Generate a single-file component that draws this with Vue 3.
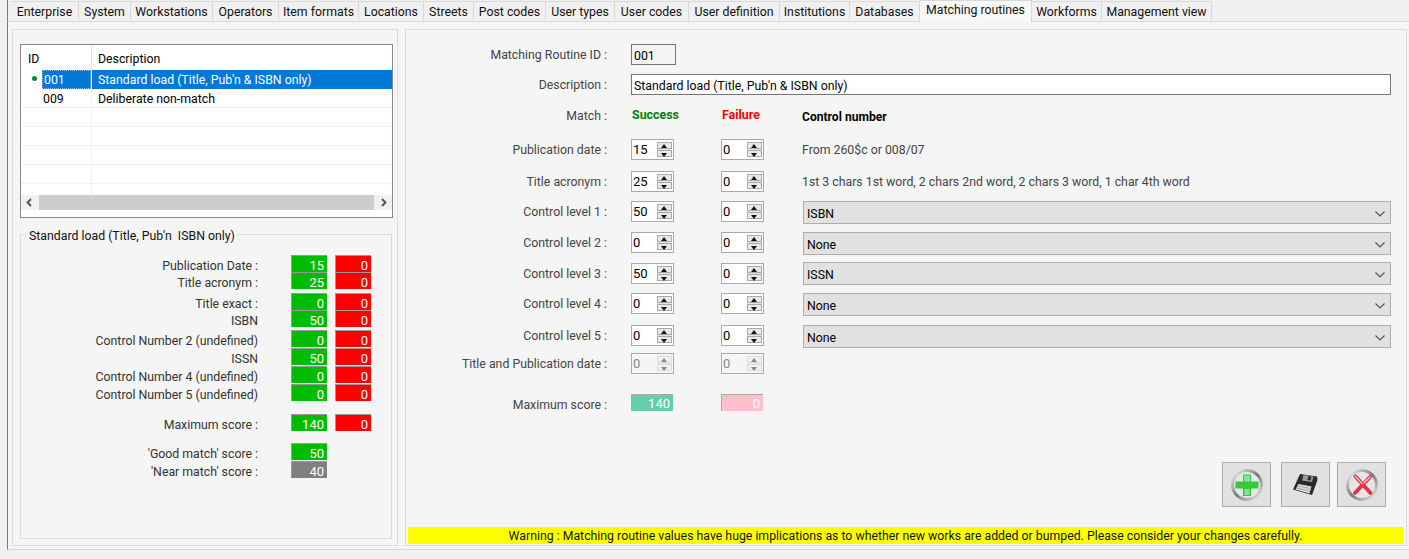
<script setup>
const tabs = [
  ['Enterprise', 68], ['System', 52], ['Workstations', 82], ['Operators', 66], ['Item formats', 80],
  ['Locations', 65], ['Streets', 50], ['Post codes', 72], ['User types', 69], ['User codes', 74],
  ['User definition', 91], ['Institutions', 70], ['Databases', 70], ['Matching routines', 112],
  ['Workforms', 70], ['Management view', 110]
]
const listRows = [
  { id: '001', desc: "Standard load (Title, Pub'n & ISBN only)", selected: true },
  { id: '009', desc: 'Deliberate non-match' },
  { id: '', desc: '' }, { id: '', desc: '' }, { id: '', desc: '' }, { id: '', desc: '' }
]
const scores = [
  { label: 'Publication Date :', s: 15, f: 0, top: 14 },
  { label: 'Title acronym :', s: 25, f: 0, top: 0 },
  { label: 'Title exact :', s: 0, f: 0, top: 4 },
  { label: 'ISBN', s: 50, f: 0, top: 0 },
  { label: 'Control Number 2 (undefined)', s: 0, f: 0, top: 3 },
  { label: 'ISSN', s: 50, f: 0, top: 1 },
  { label: 'Control Number 4 (undefined)', s: 0, f: 0, top: 1 },
  { label: 'Control Number 5 (undefined)', s: 0, f: 0, top: 1 },
  { label: 'Maximum score :', s: 140, f: 0, top: 13 },
  { label: "'Good match' score :", s: 50, top: 12 },
  { label: "'Near match' score :", s: 40, top: 1, grey: true }
]
const fields = [
  { label: 'Publication date :', s: 15, f: 0, note: 'From 260$c or 008/07', h: 32 },
  { label: 'Title acronym :', s: 25, f: 0, note: '1st 3 chars 1st word, 2 chars 2nd word, 2 chars 3 word, 1 char 4th word', h: 30 },
  { label: 'Control level 1 :', s: 50, f: 0, combo: 'ISBN', h: 31 },
  { label: 'Control level 2 :', s: 0, f: 0, combo: 'None', h: 31 },
  { label: 'Control level 3 :', s: 50, f: 0, combo: 'ISSN', comboTop: -1, h: 30 },
  { label: 'Control level 4 :', s: 0, f: 0, combo: 'None', h: 32 },
  { label: 'Control level 5 :', s: 0, f: 0, combo: 'None', h: 28 },
  { label: 'Title and Publication date :', s: 0, f: 0, disabled: true, h: 41 }
]
</script>

<template>
  <div class="app">
    <nav class="tabs">
      <div
        v-for="t in tabs"
        :key="t[0]"
        class="tab"
        :class="{ active: t[0] === 'Matching routines' }"
        :style="{ width: t[1] + 'px' }"
      >{{ t[0] }}</div>
    </nav>
    <main class="page">
      <section class="panel left">
        <div class="list">
          <div class="list-head">
            <span class="c-id">ID</span>
            <span class="c-desc">Description</span>
          </div>
          <div v-for="(r, i) in listRows" :key="i" class="list-row" :class="{ sel: r.selected }">
            <span class="c-id">
              <i v-if="r.selected" class="dot"></i>
              <b class="id-text">{{ r.id }}</b>
            </span>
            <span class="c-desc">{{ r.desc }}</span>
          </div>
          <div class="list-row tail"><span class="c-id"></span></div>
          <div class="hscroll">
            <svg width="17" height="15" viewBox="0 0 17 15"><path d="M10 4 6.500 7.500 10 11" fill="none" stroke="#505050" stroke-width="1.800"/></svg>
            <div class="thumb"></div>
            <svg width="17" height="15" viewBox="0 0 17 15"><path d="M7 4 10.500 7.500 7 11" fill="none" stroke="#505050" stroke-width="1.800"/></svg>
          </div>
        </div>
        <fieldset class="group">
          <legend>Standard load (Title, Pub'n&nbsp; ISBN only)</legend>
          <div v-for="s in scores" :key="s.label" class="score-row" :style="{ marginTop: s.top + 'px' }">
            <span class="score-label">{{ s.label }}</span>
            <span class="score" :class="s.grey ? 'grey' : 'green'">{{ s.s }}</span>
            <span v-if="s.f !== undefined" class="score red">{{ s.f }}</span>
          </div>
        </fieldset>
      </section>

      <section class="panel right">
        <div class="form">
          <div class="frow first">
            <label>Matching Routine ID :</label>
            <div class="input id-input">001</div>
          </div>
          <div class="frow desc">
            <label>Description :</label>
            <div class="input desc-input">Standard load (Title, Pub'n &amp; ISBN only)</div>
          </div>
          <div class="frow match">
            <label>Match :</label>
            <b class="h success">Success</b>
            <b class="h failure">Failure</b>
            <b class="h control">Control number</b>
          </div>
          <div v-for="f in fields" :key="f.label" class="frow" :style="{ height: f.h + 'px' }">
            <label>{{ f.label }}</label>
            <div class="cell-s">
              <div class="spin" :class="{ off: f.disabled }">
                <span class="val">{{ f.s }}</span>
                <span class="arrows">
                  <i class="up"></i><i class="down"></i>
                </span>
              </div>
            </div>
            <div class="cell-f">
              <div class="spin" :class="{ off: f.disabled }">
                <span class="val">{{ f.f }}</span>
                <span class="arrows">
                  <i class="up"></i><i class="down"></i>
                </span>
              </div>
            </div>
            <span v-if="f.note" class="note">{{ f.note }}</span>
            <div v-if="f.combo" class="combo" :style="{ marginTop: (f.comboTop || 0) + 'px' }">
              <span>{{ f.combo }}</span>
              <svg width="12" height="8" viewBox="0 0 12 8"><path d="M1.500 1.500 6 6l4.500-4.500" fill="none" stroke="#555" stroke-width="1.200"/></svg>
            </div>
          </div>
          <div class="frow maxrow">
            <label>Maximum score :</label>
            <div class="cell-s"><span class="maxbox m-green">140</span></div>
            <div class="cell-f"><span class="maxbox m-pink">0</span></div>
          </div>
        </div>

        <div class="actions">
          <button class="act add" aria-label="Add">
            <svg width="34" height="34" viewBox="0 0 34 34">
              <defs>
                <linearGradient id="ring1" x1="0" y1="0" x2="1" y2="1">
                  <stop offset="0" stop-color="#f8f8f8"/><stop offset=".5" stop-color="#777"/><stop offset="1" stop-color="#eee"/>
                </linearGradient>
              </defs>
              <circle cx="17" cy="17" r="14.500" fill="#e6e6e6" stroke="url(#ring1)" stroke-width="3"/>
              <path d="M13 6.500h8v7h7.500v7H21V28h-8v-7.500H5.500v-7H13z" fill="#35c935"/>
              <path d="M14 7.500h6v6h-6zM14.500 21h5v6h-5z" fill="#86e39a"/>
            </svg>
          </button>
          <button class="act save" aria-label="Save">
            <svg width="28" height="24" viewBox="0 0 28 24">
              <path d="M8 1 25 3.500 25.500 7 20 22 1 16.500z" fill="#2a2a2a"/>
              <path d="M11.500 2 21.500 3.500 20 9 10 7.500z" fill="#9b9b9b"/>
              <path d="M16.500 3 19.500 3.500 18.500 7.500 15.500 7z" fill="#2a2a2a"/>
              <path d="M6.500 11 19.500 13.500 17.500 20.500 3.500 16.500z" fill="#dedede"/>
              <path d="M5.500 13 18.800 15.500M4.700 15 18 18" stroke="#8a8a8a" stroke-width=".7"/>
            </svg>
          </button>
          <button class="act cancel" aria-label="Cancel">
            <svg width="34" height="34" viewBox="0 0 34 34">
              <defs>
                <linearGradient id="ring2" x1="0" y1="0" x2="1" y2="1">
                  <stop offset="0" stop-color="#f8f8f8"/><stop offset=".5" stop-color="#777"/><stop offset="1" stop-color="#eee"/>
                </linearGradient>
              </defs>
              <circle cx="17" cy="17" r="14.500" fill="#e6e6e6" stroke="url(#ring2)" stroke-width="3"/>
              <path d="M10.500 8.500 25.500 25" stroke="#e4324a" stroke-width="4" stroke-linecap="round"/>
              <path d="M25 9 10 25" stroke="#e4324a" stroke-width="4" stroke-linecap="round"/>
              <path d="M10.500 8.500 17 15.500M25 9 19 15" stroke="#f8c0c8" stroke-width="1.500" stroke-linecap="round"/>
            </svg>
          </button>
        </div>
        <div class="warning">Warning : Matching routine values have huge implications as to whether new works are added or bumped. Please consider your changes carefully.</div>
      </section>
    </main>
  </div>
</template>

<style>
html, body { margin: 0; background: #f0f0f0; overflow: hidden; }
</style>

<style scoped>
.app {
  width: 1409px;
  height: 559px;
  background: #f0f0f0;
  font-family: Roboto, "Open Sans", sans-serif;
  font-size: 12.3px;
  color: #000;
  position: relative;
  overflow: hidden;
}
.tabs {
  display: flex;
  height: 21px;
  margin-left: 7px;
  padding-left: 3px;
  box-sizing: border-box;
  align-items: flex-end;
  background: #f0f0f0;
  border-left: 1px solid #777;
}
.tab {
  box-sizing: border-box;
  height: 20px;
  background: #f0f0f0;
  border: 1px solid #d9d9d9;
  border-bottom: none;
  border-left: none;
  line-height: 20px;
  text-align: center;
  white-space: nowrap;
  color: #111;
}
.tab.active {
  height: 22px;
  line-height: 19px;
  margin-bottom: -1px;
  background: #f8f8f8;
  position: relative;
  z-index: 2;
}
.page {
  margin-left: 7px;
  width: 1402px;
  height: 529px;
  box-sizing: border-box;
  background: #f5f5f5;
  border: 1px solid #d9d9d9;
  border-left: 1px solid #777;
  border-right: none;
  padding: 7px 1px 3px 4px;
  display: flex;
  gap: 7px;
}
.panel {
  box-sizing: border-box;
  background: #f5f5f5;
  border: 1px solid #dcdcdc;
  height: 517px;
}
.left {
  width: 386px;
  padding: 14px 0 0 7px;
}
.right {
  width: 1002px;
  display: flex;
  flex-direction: column;
  padding: 0 2px;
  position: relative;
}
.list {
  width: 373px;
  height: 174px;
  box-sizing: border-box;
  background: #fff;
  border: 1px solid #828790;
}
.list-head {
  display: flex;
  height: 25px;
  align-items: center;
}
.list-head .c-id {
  padding-left: 7px;
  border-right: 1px solid #e5e5e5;
  height: 100%;
  display: flex;
  align-items: center;
  padding-top: 2px;
}
.list-head .c-desc { padding-top: 2px; }
.list-row {
  display: flex;
  height: 19px;
  align-items: center;
  border-bottom: 1px solid #f0f0f0;
  box-sizing: border-box;
  line-height: 19px;
}
.list-row.tail { height: 11px; border-bottom: none; }
.c-id {
  width: 71px;
  flex: none;
  box-sizing: border-box;
  position: relative;
  height: 100%;
}
.list-row .c-id { border-right: 1px solid #eee; }
.c-desc { padding: 2px 0 0 6px; white-space: nowrap; }
.id-text { font-weight: 400; position: absolute; left: 22px; top: 1px; }
.dot {
  position: absolute;
  left: 11px;
  top: 6px;
  width: 5px;
  height: 5px;
  border-radius: 50%;
  background: #0a8a3a;
}
.list-row.sel { background: #0078d7; color: #fff; border-bottom: none; }
.list-row.sel .c-id { background: #fff; border-right: 1px solid #fff; }
.list-row.sel .id-text {
  left: 21px;
  right: 0;
  top: 0;
  bottom: 0;
  padding-left: 2px;
  line-height: 21px;
  background: #0078d7;
  outline: 1px dotted #8fb8e0;
  outline-offset: -1px;
}
.hscroll {
  display: flex;
  height: 15px;
  background: #f0f0f0;
  align-items: center;
}
.thumb { flex: 1; height: 15px; background: #cdcdcd; margin: 0 1px; }
.group {
  margin: 9px 0 0;
  padding: 0;
  width: 372px;
  height: 312px;
  box-sizing: border-box;
  border: 1px solid #dcdcdc;
  display: block;
  min-width: 0;
}
legend {
  margin-left: 5px;
  padding: 0 2px 0 3px;
  line-height: 18px;
  height: 14px;
  white-space: nowrap;
  color: #111;
}
.score-row {
  display: flex;
  height: 17px;
  align-items: stretch;
}
.score-label {
  width: 237px;
  text-align: right;
  line-height: 23px;
  color: #333;
  flex: none;
  white-space: nowrap;
}
.score {
  box-sizing: border-box;
  width: 36px;
  margin-left: 33px;
  border-top: 1px solid #999;
  border-left: 1px solid #999;
  color: #fff;
  text-align: right;
  padding-right: 3px;
  line-height: 19px;
  font-size: 13px;
  overflow: hidden;
}
.score.red { margin-left: 8px; background: #ff0000; }
.score.green { background: #00bc00; }
.score.grey { background: #808080; }
.form { padding-top: 14px; }
.frow {
  display: flex;
  align-items: flex-start;
}
.frow.first { height: 30px; }
.frow.desc { height: 31px; }
.frow.match { height: 34px; }
.frow label {
  width: 199px;
  flex: none;
  text-align: right;
  color: #444;
  line-height: 23px;
  white-space: nowrap;
}
.input {
  box-sizing: border-box;
  height: 21px;
  margin-left: 24px;
  border: 1px solid #767676;
  line-height: 22px;
  padding-left: 2px;
}
.id-input { width: 45px; background: #f5f5f5; }
.desc-input { width: 760px; background: #fff; }
.h { font-weight: 700; line-height: 19px; font-size: 12.4px; }
.success { color: #008000; margin-left: 25px; width: 90px; }
.failure { color: #ff0000; width: 80px; }
.control { color: #000; margin-top: 3px; font-size: 12.1px; }
.cell-s { width: 90px; margin-left: 24px; flex: none; }
.cell-f { width: 82px; flex: none; }
.spin {
  box-sizing: border-box;
  width: 43px;
  height: 21px;
  border: 1px solid #aaa;
  background: #fff;
  display: flex;
  justify-content: space-between;
  padding: 2px 1px;
}
.val { line-height: 16px; font-size: 13px; }
.arrows {
  width: 15px;
  display: flex;
  flex-direction: column;
  gap: 1px;
  background: #e4e4e4;
}
.arrows i {
  flex: 1;
  display: block;
  position: relative;
  border: 1px solid #aaa;
  background: #e8e8e8;
}
.arrows i::after {
  content: "";
  position: absolute;
  left: 3px;
  width: 0;
  height: 0;
  border-left: 3px solid transparent;
  border-right: 3px solid transparent;
}
.arrows .up::after { top: 1px; border-bottom: 4px solid #111; }
.arrows .down::after { top: 2px; border-top: 4px solid #111; }
.spin.off { background: #f5f5f5; color: #888; }
.spin.off .arrows i { background: #f0f0f0; border-color: #ddd; }
.spin.off .up::after { border-bottom-color: #888; }
.spin.off .down::after { border-top-color: #888; }
.note { line-height: 23px; color: #444; white-space: nowrap; margin-left: -1px; }
.combo {
  box-sizing: border-box;
  width: 588px;
  height: 23px;
  background: #e1e1e1;
  border: 1px solid #adadad;
  display: flex;
  align-items: center;
  justify-content: space-between;
  padding: 2px 4px 0 3px;
}
.maxrow { height: 17px; }
.maxrow label { line-height: 22px; }
.maxbox {
  box-sizing: border-box;
  display: block;
  height: 17px;
  width: 42px;
  border-top: 1px solid #aaa;
  border-left: 1px solid #aaa;
  color: #fff;
  text-align: right;
  padding-right: 3px;
  line-height: 17px;
  font-size: 13px;
}
.m-green { background: #66cdaa; }
.m-pink { background: #ffc0cb; }
.actions {
  display: flex;
  position: absolute;
  left: 816px;
  top: 432px;
}
.act {
  width: 49px;
  height: 45px;
  box-sizing: border-box;
  background: #e1e1e1;
  border: 1px solid #adadad;
  padding: 0;
  display: flex;
  align-items: center;
  justify-content: center;
}
.save { margin-left: 10px; }
.cancel { margin-left: 7px; }
.warning {
  position: absolute;
  left: 2px;
  top: 497px;
  width: 995px;
  height: 17px;
  background: #ffff00;
  text-align: center;
  line-height: 19px;
  color: #111;
  white-space: nowrap;
}
</style>
